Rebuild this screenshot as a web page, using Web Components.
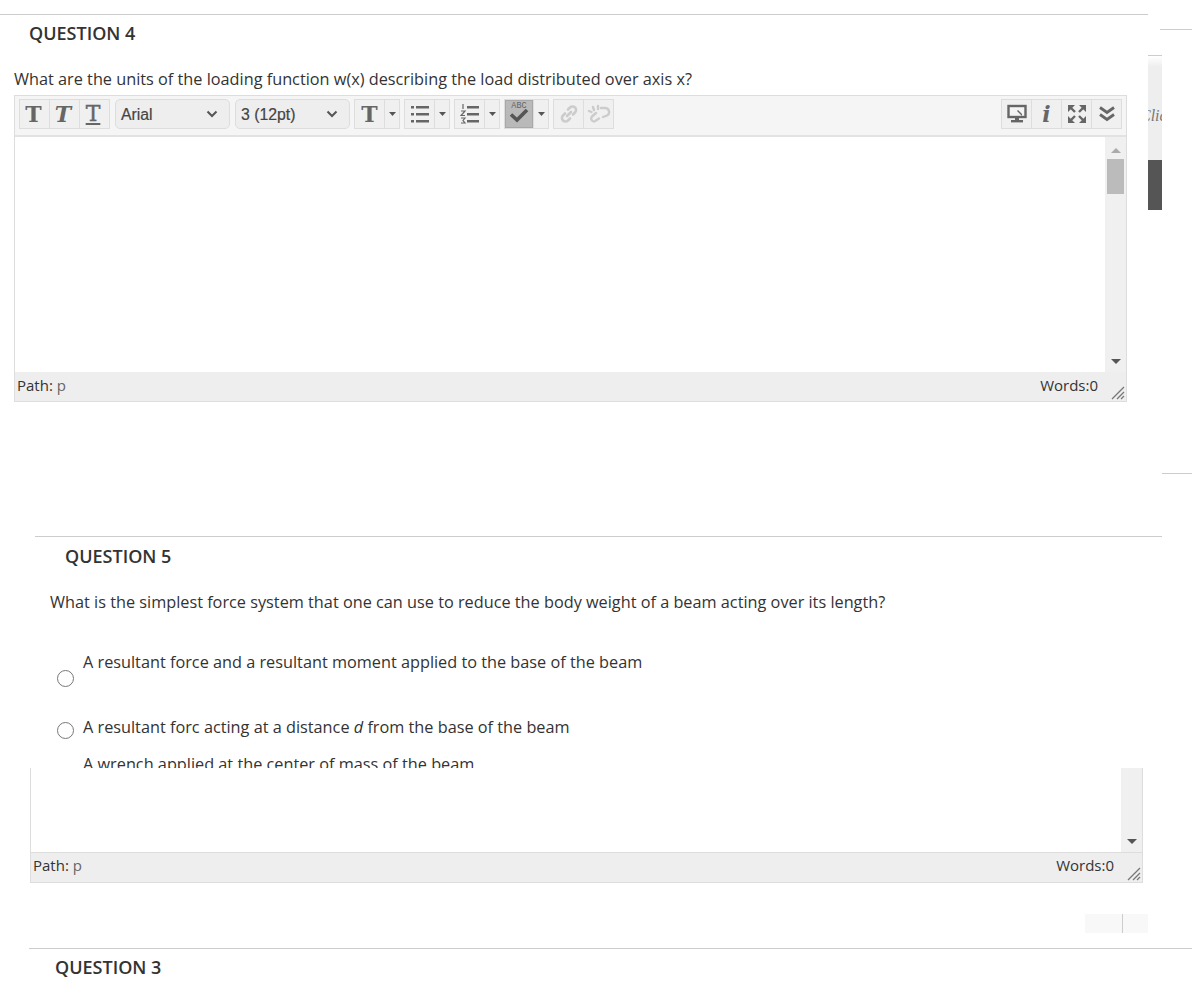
<!DOCTYPE html>
<html lang="en"><head><meta charset="utf-8"><title>Quiz</title>
<style>
html,body{margin:0;padding:0;background:#fff}
body{font:16.27px/22px "Open Sans",sans-serif;color:#333}
</style></head><body>
<quiz-page>
  <quiz-section rule-left="0" rule-right="44" head-left="29" number="4" text-left="14">
    What are the units of the loading function w(x) describing the load distributed over axis x?
    <rich-editor slot="after" toolbar body-height="235" style="margin:5px 0 0 14px"></rich-editor>
  </quiz-section>
  <quiz-section rule-left="35" rule-right="30" head-left="65" head-gap="7" number="5" text-left="50" style="margin-top:134px;height:232px;overflow:hidden">
    What is the simplest force system that one can use to reduce the body weight of a beam acting over its length?
    <div slot="after" style="margin-top:38px">
      <answer-option radio="end" style="height:36px">A resultant force and a resultant moment applied to the base of the beam</answer-option>
      <answer-option radio="low" style="margin-top:29px;height:23px">A resultant forc acting at a distance <i>d</i> from the base of the beam</answer-option>
      <answer-option style="margin-top:14px">A wrench applied at the center of mass of the beam</answer-option>
    </div>
  </quiz-section>
  <rich-editor body-height="84" cut style="margin-left:30px"></rich-editor>
  <page-scrap></page-scrap>
  <quiz-section rule-left="29" rule-right="0" head-left="55" number="3" style="margin-top:15px"></quiz-section>
  <side-scraps></side-scraps>
</quiz-page>
<script>
function el(name, css, html){
  customElements.define(name, class extends HTMLElement{
    connectedCallback(){
      if(this.shadowRoot) return;
      const r=this.attachShadow({mode:'open'});
      r.innerHTML='<style>'+css+'</style>'+(typeof html==='function'?html(this):html);
    }
  });
}
el('quiz-page',':host{display:block;position:relative;width:1192px;height:992px;overflow:hidden;background:#fff}.top{height:14px}','<div class="top"></div><slot></slot>');
el('quiz-section',`:host{display:block}
.rule{height:1px;background:#ccc}
h2{margin:6px 0 0;font:600 18px/24px "Open Sans",sans-serif;color:#333}
.q{margin-top:23px;min-height:22px}`,
t=>`<div class="rule" style="margin-left:${t.getAttribute('rule-left')}px;margin-right:${t.getAttribute('rule-right')}px"></div>
<h2 style="margin-left:${t.getAttribute('head-left')}px;margin-top:${t.getAttribute('head-gap')||6}px">QUESTION ${t.getAttribute('number')}</h2>
${t.hasAttribute('text-left')?`<div class="q" style="margin-left:${t.getAttribute('text-left')}px"><slot></slot></div>`:''}<slot name="after"></slot>`);
el('answer-option',`:host{display:flex;position:relative;padding-left:83px;line-height:22px;color:#333}
.r{position:absolute;left:57px;width:15px;height:15px;border:1px solid #777;border-radius:50%;background:#fff}
:host([radio=end]) .r{bottom:0}
:host([radio=low]) .r{bottom:0}
:host(:not([radio])) .r{display:none}`,'<span class="r"></span><span><slot></slot></span>');

const I={
 list:'<svg width="20" height="20" viewBox="0 0 20 20"><g fill="#666"><rect x="1" y="2" width="3" height="2.500"/><rect x="1" y="9" width="3" height="2.500"/><rect x="1" y="16" width="3" height="2.500"/><rect x="6" y="2" width="13" height="2.500"/><rect x="6" y="9" width="13" height="2.500"/><rect x="6" y="16" width="13" height="2.500"/></g></svg>',
 num:'<svg width="20" height="22" viewBox="0 0 20 22"><g fill="#666"><rect x="7" y="3" width="12" height="2.500"/><rect x="7" y="10" width="12" height="2.500"/><rect x="7" y="17" width="12" height="2.500"/></g><path d="M3 1v5M1 8h4l-4 4.500h4M1 15h4l-2 2.500 2 2.500H1" fill="none" stroke="#666" stroke-width="1.200"/></svg>',
 link:'<svg width="20" height="20" viewBox="0 0 20 20"><g fill="none" stroke="#ccc" stroke-width="2.600" stroke-linecap="round"><path d="M9 5.500l2-2a3.500 3.500 0 0 1 5 5l-2 2"/><path d="M11 14.500l-2 2a3.500 3.500 0 0 1-5-5l2-2"/><path d="M8 12l4-4"/></g></svg>',
 unlink:'<svg width="24" height="20" viewBox="0 0 24 20"><g fill="none" stroke="#ccc" stroke-width="2.400" stroke-linecap="round"><path d="M14 4h4a4 4 0 0 1 2 7.500l-4 1.500"/><path d="M9 9l-4 3.500a2.800 2.800 0 0 0 4 4l3-2"/><path d="M6 3l1 3M11 2v3M2 7l2.500 1"/></g></svg>',
 screen:'<svg width="20" height="20" viewBox="0 0 20 20"><rect x="1.500" y="2" width="17" height="11" fill="#f4f4f4" stroke="#666" stroke-width="2.400"/><path d="M11 6l4 4v2l-5-5z" fill="#666"/><rect x="8" y="14" width="4" height="2" fill="#666"/><rect x="4" y="16" width="12" height="2.400" fill="#666"/></svg>',
 full:'<svg width="20" height="20" viewBox="0 0 20 20"><g fill="#666"><path d="M1 1h7L1 8zM19 1h-7l7 7zM1 19h7l-7-7zM19 19h-7l7-7z"/></g><path d="M4 4l4 4M16 4l-4 4M4 16l4-4M16 16l-4-4" stroke="#666" stroke-width="2.400"/></svg>',
 dbl:'<svg width="18" height="18" viewBox="0 0 18 18"><path d="M2 2.500l7 5 7-5M2 9.500l7 5 7-5" fill="none" stroke="#666" stroke-width="2.800"/></svg>',
 check:'<svg width="24" height="14" viewBox="0 0 24 14" style="margin-top:-1px"><path d="M4 5.500l6 5.500 10-10" fill="none" stroke="#555" stroke-width="3.600"/></svg>',
 caret:'<svg width="7" height="4" viewBox="0 0 7 4"><path d="M0 0h7L3.500 4z" fill="#555"/></svg>',
 chev:'<svg width="12" height="8" viewBox="0 0 12 8"><path d="M1.500 1.500L6 6l4.500-4.500" fill="none" stroke="#555" stroke-width="2"/></svg>'
};
el('tb-group',`:host{display:flex;height:28px;border:1px solid #ddd;background:#f0f0f0}`,'<slot></slot>');
el('tb-btn',`:host{display:flex;align-items:center;justify-content:center;width:30px;height:28px;box-sizing:border-box;border-left:1px solid #ddd;color:#666;font:bold 22px/28px "DejaVu Serif",serif}
:host(:first-child){border-left:0;width:29px}
:host([narrow]){width:15px}
:host([plain]){font-weight:normal;-webkit-text-stroke:.4px #666}
:host([on]){background:#b9b9b9;box-shadow:inset 0 0 0 1px #a8a8a8;position:relative;width:28px;font:10px/10px "Liberation Mono",monospace;color:#666;flex-direction:column;justify-content:flex-start;padding-top:2px}`,'<slot></slot>');
el('tb-select',`:host{display:flex;align-items:center;justify-content:space-between;box-sizing:border-box;width:115px;height:30px;padding:2px 11px 0 5px;background:#eee;border:1px solid #ddd;border-radius:5px;font:15.8px/26px "Liberation Sans",sans-serif;color:#444;-webkit-text-stroke:.2px #444}
svg{margin-top:-2px}`,`<span><slot></slot></span>${I.chev}`);

el('rich-editor',`:host{display:block;box-sizing:border-box;width:1113px;border:1px solid #ddd;background:#fff}
:host([cut]){border-top:0}
.tb{display:flex;align-items:center;gap:5px;box-sizing:border-box;height:41px;padding:3px 4px 6px 4px;background:#f5f5f5;border-bottom:2px solid #e2e2e2}
.tb .s{gap:4px;display:flex;margin-left:-1px}
.sp{margin-left:auto}
.body{display:flex;justify-content:flex-end}
.bar{position:relative;width:21px;background:#f0f0f0}
.up{position:absolute;top:11px;left:6px;border:5px solid transparent;border-top:0;border-bottom:5px solid #aaa}
.th{position:absolute;top:22px;left:2px;width:17px;height:35px;background:#bbb}
.dn{position:absolute;bottom:8px;left:6px;border:5px solid transparent;border-bottom:0;border-top:5px solid #555}
.st{display:flex;align-items:flex-start;justify-content:space-between;height:29px;padding:0 28px 0 2px;background:#eee;position:relative;color:#333;font-size:15px;line-height:26px}
:host([cut]) .st{border-top:1px solid #ddd}
:host([cut]) .st span.w, :host([cut]) .st span.l{margin-top:-1px}
.st svg{position:absolute;right:1px;bottom:1px}
.p{color:#666}
i{font:italic bold 22px/28px "DejaVu Serif",serif}
u{text-underline-offset:2px}
small{display:block;font-size:8.500px;line-height:8px}`,
t=>{
 const tb=`<div class="tb">
 <tb-group><tb-btn style="padding-right:2px">T</tb-btn><tb-btn style="padding-right:3px"><i>T</i></tb-btn><tb-btn plain style="padding-right:3px"><u>T</u></tb-btn></tb-group>
 <tb-select>Arial</tb-select><tb-select>3 (12pt)</tb-select>
 <span class="s">
 <tb-group><tb-btn>T</tb-btn><tb-btn narrow>${I.caret}</tb-btn></tb-group>
 <tb-group><tb-btn>${I.list}</tb-btn><tb-btn narrow>${I.caret}</tb-btn></tb-group>
 <tb-group><tb-btn>${I.num}</tb-btn><tb-btn narrow>${I.caret}</tb-btn></tb-group>
 <tb-group><tb-btn on><small>ABC</small>${I.check}</tb-btn><tb-btn narrow>${I.caret}</tb-btn></tb-group>
 <tb-group><tb-btn>${I.link}</tb-btn><tb-btn>${I.unlink}</tb-btn></tb-group>
 </span>
 <tb-group class="sp"><tb-btn>${I.screen}</tb-btn><tb-btn><i>i</i></tb-btn><tb-btn>${I.full}</tb-btn><tb-btn>${I.dbl}</tb-btn></tb-group>
 </div>`;
 const h=t.getAttribute('body-height');
 return `${t.hasAttribute('toolbar')?tb:''}
 <div class="body" style="height:${h}px"><div class="bar">${t.hasAttribute('toolbar')?'<span class="up"></span><span class="th"></span>':''}<span class="dn"></span></div></div>
 <div class="st"><span class="l">Path: <span class="p">p</span></span><span class="w">Words:0</span>
 <svg width="14" height="14" viewBox="0 0 14 14"><path d="M1 13L13 1M6 13l7-7M10 13l3-3" stroke="#777" stroke-width="1.300" fill="none"/></svg></div>`;
});
el('page-scrap',`:host{display:block;box-sizing:border-box;width:63px;height:19px;margin:31px 0 0 1085px;background:#f8f8f8;position:relative}
b{position:absolute;left:37px;top:0;width:1px;height:19px;background:#ccc}`,'<b></b>');
el('side-scraps',`:host{display:block;position:absolute;left:0;top:0}
.a{position:absolute;left:1160px;top:29px;width:32px;height:1px;background:#ccc}
.b{position:absolute;left:1162px;top:473px;width:30px;height:1px;background:#ccc}
.c{position:absolute;left:1148px;top:55px;width:14px;height:155px;overflow:hidden;border-top:1px solid #ccc;box-sizing:border-box;background:linear-gradient(#fff 0,#eee 11px)}
.d{position:absolute;left:0;top:104px;width:14px;height:50px;background:#555}
.t{position:absolute;left:-8px;top:50px;font:italic 16px/20px "Liberation Serif",serif;color:#777;white-space:nowrap}`,
'<div class="a"></div><div class="b"></div><div class="c"><span class="t">Click</span><div class="d"></div></div>');
</script>
</body></html>
